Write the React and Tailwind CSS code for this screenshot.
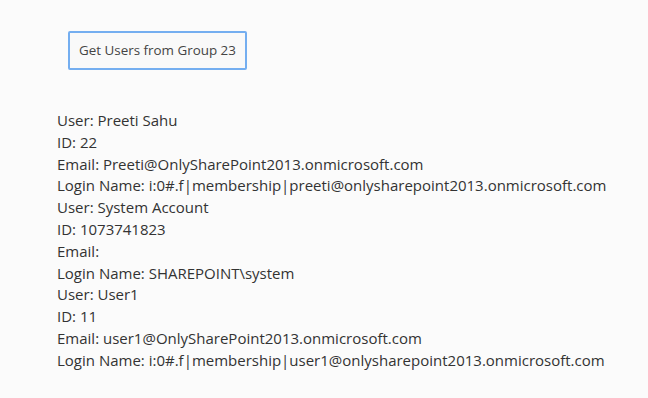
export default function App() {
  const lines = [
    "User: Preeti Sahu",
    "ID: 22",
    "Email: Preeti@OnlySharePoint2013.onmicrosoft.com",
    "Login Name: i:0#.f|membership|preeti@onlysharepoint2013.onmicrosoft.com",
    "User: System Account",
    "ID: 1073741823",
    "Email:",
    "Login Name: SHAREPOINT\\system",
    "User: User1",
    "ID: 11",
    "Email: user1@OnlySharePoint2013.onmicrosoft.com",
    "Login Name: i:0#.f|membership|user1@onlysharepoint2013.onmicrosoft.com",
  ];
  return (
    <div className="w-[648px] h-[398px] bg-[#fbfbfb] text-[#333333]" style={{ fontFamily: '"Open Sans", sans-serif' }}>
      <div className="pt-[31px] pl-[68px]">
        <button className="w-[179px] h-[39px] border-2 border-[#74aef0] bg-[#f9f9f9] text-[13.4px] text-[#444444] rounded-[2px]">
          Get Users from Group 23
        </button>
      </div>
      <div className="pl-[57px] pt-[40px] text-[15px] leading-[21.8px]">
        {lines.map((l, i) => (
          <div key={i}>{l}</div>
        ))}
      </div>
    </div>
  );
}
